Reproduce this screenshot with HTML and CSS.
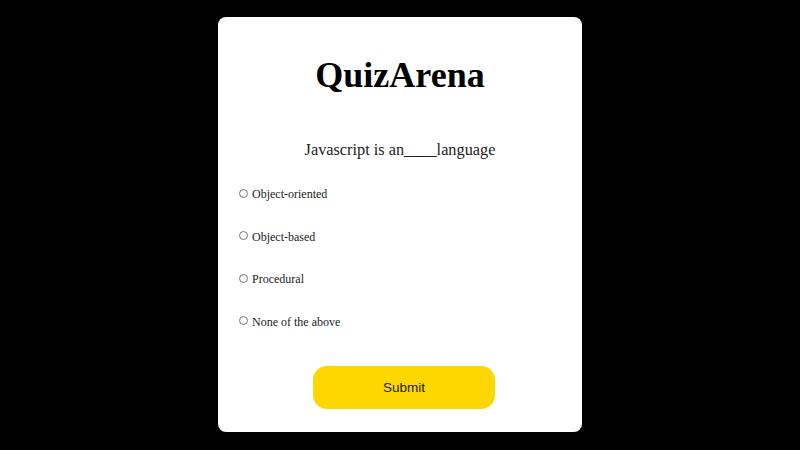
FILE: index.html
```html
<!DOCTYPE html>
<html>
<head>
<meta charset="utf-8">
<link rel="stylesheet" href="styles.css">
</head>
<body>
<div class="card">
  <h1 class="title">QuizArena</h1>
  <p class="question">Javascript is an____language</p>
  <ul class="options">
    <li><label><input type="radio" name="q"> Object-oriented</label></li>
    <li><label><input type="radio" name="q"> Object-based</label></li>
    <li><label><input type="radio" name="q"> Procedural</label></li>
    <li><label><input type="radio" name="q"> None of the above</label></li>
  </ul>
  <div class="actions"><button class="submit">Submit</button></div>
</div>
</body>
</html>
```
FILE: styles.css
```css
html, body { margin: 0; padding: 0; }
body {
  background: #000;
  font-family: "Liberation Serif", "Times New Roman", serif;
  color: #222;
  width: 800px;
  height: 450px;
  display: flex;
  justify-content: center;
  align-items: flex-start;
}
.card {
  margin-top: 17px;
  width: 364px;
  height: 415px;
  background: #fff;
  border-radius: 8px;
  box-sizing: border-box;
  padding: 0 21px;
  display: flex;
  flex-direction: column;
}
.title {
  margin: 0;
  padding-top: 37px;
  font-size: 36px;
  line-height: 42px;
  text-align: center;
  font-weight: bold;
  color: #000;
}
.question {
  margin: 0;
  padding-top: 44px;
  font-size: 16.3px;
  line-height: 20px;
  text-align: center;
  color: #222;
}
.options {
  list-style: none;
  margin: 0;
  padding: 27px 0 0 0;
  display: flex;
  flex-direction: column;
  gap: 28.5px;
}
.options li {
  font-size: 12px;
  line-height: 14px;
}
.options label {
  display: flex;
  align-items: center;
  gap: 4px;
}
.options input {
  appearance: none;
  -webkit-appearance: none;
  width: 9px;
  height: 9px;
  margin: 0;
  border: 1px solid #777;
  border-radius: 50%;
  box-sizing: border-box;
  background: #fff;
  position: relative;
  top: -1px;
}
.actions {
  display: flex;
  justify-content: center;
  padding-top: 37px;
}
.submit {
  width: 182px;
  height: 43px;
  background: #ffd700;
  border: none;
  border-radius: 14px;
  font-family: "Liberation Sans", Arial, sans-serif;
  font-size: 13.5px;
  color: #222;
  position: relative;
  left: 4px;
}
```
